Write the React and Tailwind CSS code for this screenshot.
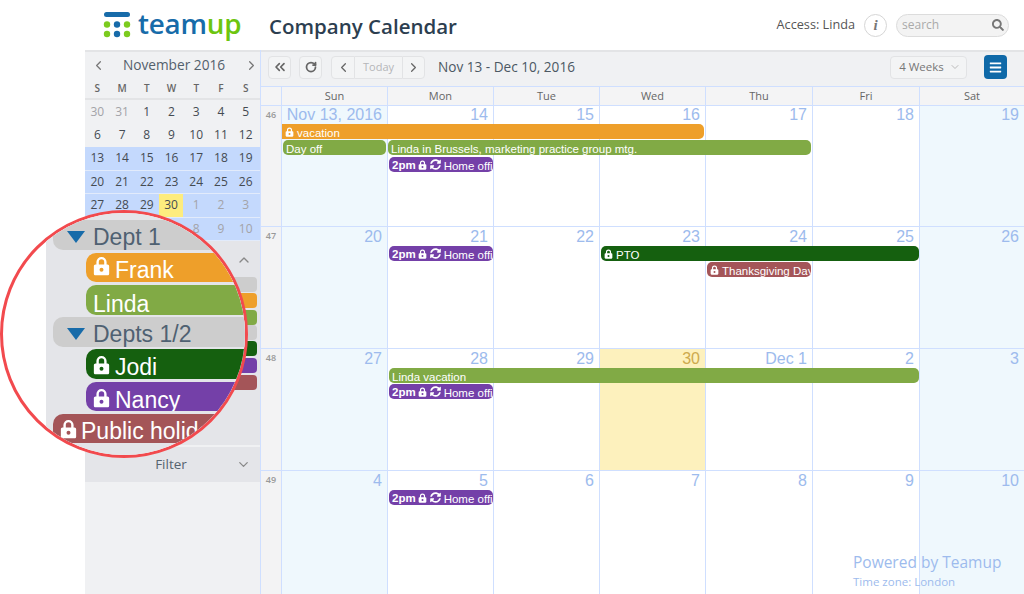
import React from "react";
import { FaSearch, FaSyncAlt, FaBars } from "react-icons/fa";
import { ChevronLeft, ChevronRight, ChevronsLeft, ChevronDown, ChevronUp, RotateCw } from "lucide-react";

const OPEN = "font-['Open_Sans',sans-serif]";

function Lock({ className }) {
  return (
    <svg viewBox="0 0 12 14" className={className} fill="currentColor">
      <path fillRule="evenodd" d="M2.4 6V4.2a3.6 3.6 0 0 1 7.2 0V6h.6c.7 0 1.2.5 1.2 1.2v5.2c0 .7-.5 1.2-1.2 1.2H1.8c-.7 0-1.2-.5-1.2-1.2V7.200c0-.7.5-1.2 1.200-1.2h.6zm1.700 0h3.800V4.200a1.900 1.900 0 0 0-3.800 0V6zM6 8.300a1.400 1.400 0 1 0 0 2.800 1.400 1.400 0 0 0 0-2.800z" />
    </svg>
  );
}

function Logo() {
  return (
    <div className="flex items-center h-full">
      <svg width="30" height="30" viewBox="0 0 30 30" className="ml-[18px] shrink-0">
        <rect x="1" y="2" width="26" height="5" rx="2.500" fill="#176ba9" />
        <circle cx="4" cy="14.500" r="3.200" fill="#7ccb1e" />
        <circle cx="14" cy="14.500" r="3.200" fill="#176ba9" />
        <circle cx="24" cy="14.500" r="3.200" fill="#7ccb1e" />
        <circle cx="4" cy="24" r="3.200" fill="#7ccb1e" />
        <circle cx="14" cy="24" r="3.200" fill="#176ba9" />
        <circle cx="24" cy="24" r="3.200" fill="#7ccb1e" />
      </svg>
      <div className={`${OPEN} ml-[5px] text-[27.800px] font-semibold tracking-[-0.2px] leading-none pb-[2px]`}>
        <span className="text-[#176ba9]">team</span>
        <span className="text-[#6cc510]">up</span>
      </div>
    </div>
  );
}

function Header() {
  return (
    <div className={`${OPEN} h-[50px] flex items-center bg-white`}>
      <div className="w-[158px] h-full">
        <Logo />
      </div>
      <div className="ml-[26px] pt-[2px] text-[20.500px] font-semibold text-[#2c3e50] leading-none">Company Calendar</div>
      <div className="ml-auto flex items-center mr-[15px]">
        <span className="text-[12.700px] text-[#555]">Access: Linda</span>
        <div className="ml-[9px] w-[23px] h-[23px] rounded-full border border-[#d6d6d6] flex items-center justify-center font-['Liberation_Serif',serif] italic font-bold text-[15px] text-[#777]">i</div>
        <div className="ml-[9px] w-[113px] h-[23px] rounded-full border border-[#dcdcdc] bg-[#f3f3f3] flex items-center pl-[5px] pr-[4px]">
          <span className="text-[12px] text-[#aaa]">search</span>
          <FaSearch className="ml-auto text-[12px] text-[#777]" />
        </div>
      </div>
    </div>
  );
}

const MINI = [
  [["30", 1], ["31", 1], "1", "2", "3", "4", "5"],
  ["6", "7", "8", "9", "10", "11", "12"],
  ["13", "14", "15", "16", "17", "18", "19"],
  ["20", "21", "22", "23", "24", "25", "26"],
  ["27", "28", "29", ["30", 2], ["1", 1], ["2", 1], ["3", 1]],
  [["4", 1], ["5", 1], ["6", 1], ["7", 1], ["8", 1], ["9", 1], ["10", 1]],
];

function MiniCal() {
  return (
    <div className={`${OPEN} text-[#555]`}>
      <div className="h-[27px] flex items-center justify-between pl-[6px] pr-[1px]">
        <ChevronLeft size={15} strokeWidth={2} className="text-[#777]" />
        <span className="text-[13.700px] text-[#53606c] pr-[2px]">November 2016</span>
        <ChevronRight size={15} strokeWidth={2} className="text-[#777]" />
      </div>
      <div className="grid grid-cols-7 h-[21px] border-b-2 border-[#e3e4e6] text-[10px] font-semibold text-[#666] text-center items-center pr-[2px]">
        {["S", "M", "T", "W", "T", "F", "S"].map((d, i) => (
          <span key={i}>{d}</span>
        ))}
      </div>
      {MINI.map((row, r) => (
        <div key={r} className={`grid grid-cols-7 h-[23.500px] text-[12px] text-center pr-[2px] ${r >= 2 ? "bg-[#c4d9fd] border-b border-[#e2ebfb]" : ""}`}>
          {row.map((c, i) => {
            const arr = Array.isArray(c);
            const txt = arr ? c[0] : c;
            const kind = arr ? c[1] : 0;
            return (
              <span
                key={i}
                className={`flex items-center justify-center ${kind === 1 ? "text-[#a3a3a8]" : "text-[#444b52]"} ${kind === 2 ? "bg-[#fdec7e] mr-[1px]" : ""}`}
              >
                {txt}
              </span>
            );
          })}
        </div>
      ))}
    </div>
  );
}

function Sidebar() {
  return (
    <div className="w-[175px] shrink-0 bg-[#f0f1f3] flex flex-col border-t-2 border-[#e3e4e6]">
      <MiniCal />
      <div className="h-[204px] bg-[#e4e5e9] flex flex-col items-end pr-[3px]">
        <ChevronUp size={16} className="text-[#888] mt-[11px] mr-[5px]" />
        <div className="w-full flex flex-col mt-[9px]">
          <div className="h-[15px] rounded-[4px] bg-[#cdcdcd]" />
          <div className="h-[15px] mt-[1px] rounded-[4px] bg-[#ee9f2a]" />
          <div className="h-[15px] mt-[2px] rounded-[4px] bg-[#81aa45]" />
          <div className="h-[15px] rounded-[4px] bg-[#cdcdcd]" />
          <div className="h-[15px] mt-[1px] rounded-[4px] bg-[#15600f]" />
          <div className="h-[15px] mt-[2px] rounded-[4px] bg-[#7440a8]" />
          <div className="h-[15px] mt-[2px] rounded-[4px] bg-[#a45558]" />
        </div>
      </div>
      <div className={`${OPEN} h-[35px] mt-[2px] bg-[#e4e5e9] flex items-center justify-center relative text-[13.500px] text-[#56636f] pr-[3px]`}>
        Filter
        <ChevronDown size={15} className="absolute right-[9px] text-[#888]" />
      </div>
    </div>
  );
}

function Btn({ children, className = "" }) {
  return (
    <div className={`h-[23px] flex items-center justify-center border border-[#e2e3e5] bg-[#f3f4f5] text-[#666] ${className}`}>
      {children}
    </div>
  );
}

function Toolbar() {
  return (
    <div className={`${OPEN} h-[36px] bg-[#f0f1f3] border-t-2 border-[#e3e4e6] flex items-center pl-[7px] pb-[4px]`}>
      <Btn className="w-[23px] rounded-[4px]"><ChevronsLeft size={16} strokeWidth={2.5} /></Btn>
      <Btn className="w-[23px] rounded-[4px] ml-[8px]"><RotateCw size={12} strokeWidth={3.500} /></Btn>
      <div className="flex ml-[9px]">
        <Btn className="w-[24px] rounded-l-[4px]"><ChevronLeft size={15} strokeWidth={2} /></Btn>
        <Btn className="w-[47px] border-l-0 border-r-0 text-[11px] text-[#b5b6b9]">Today</Btn>
        <Btn className="w-[23px] rounded-r-[4px]"><ChevronRight size={15} strokeWidth={2} /></Btn>
      </div>
      <span className="ml-[13px] text-[13.600px] text-[#4c5863]">Nov 13 - Dec 10, 2016</span>
      <Btn className="ml-auto w-[77px] rounded-[4px] text-[11.500px] text-[#777] gap-[5px] pl-[3px]">
        4 Weeks <ChevronDown size={12} className="text-[#bbb]" />
      </Btn>
      <div className="ml-[17px] mr-[17px] w-[23px] h-[24px] rounded-[4px] bg-[#0f69a8] flex items-center justify-center text-white">
        <FaBars className="text-[13px]" />
      </div>
    </div>
  );
}

const COLS = "grid-cols-[106px_106px_106px_106px_107px_107px_105px]";

const COL_START = {
  1: "col-start-1",
  2: "col-start-2",
  3: "col-start-3",
  4: "col-start-4",
  5: "col-start-5",
  6: "col-start-6",
  7: "col-start-7",
};
const COL_END = {
  2: "col-end-2",
  3: "col-end-3",
  4: "col-end-4",
  5: "col-end-5",
  6: "col-end-6",
  7: "col-end-7",
  8: "col-end-8",
};
const ROW = { 2: "row-start-2", 3: "row-start-3", 4: "row-start-4" };

function Event({ from, to, row, color, locked, time, repeat, text, className = "" }) {
  return (
    <div
      className={`${COL_START[from]} ${COL_END[to]} ${ROW[row]} h-[15px] mx-[1px] overflow-hidden rounded-[5px] flex items-center whitespace-nowrap text-white text-[11.500px] leading-[15px] font-['Liberation_Sans',sans-serif] pl-[3px] ${color} ${className}`}
    >
      {time && <b className="mr-[2px] shrink-0 pt-[2px]">{time}</b>}
      {locked && <Lock className="w-[9px] h-[10px] mr-[3px] shrink-0" />}
      {repeat && <FaSyncAlt className="text-[11px] mr-[3px] shrink-0" />}
      <span className="pt-[3px]">{text}</span>
    </div>
  );
}

function Home({ row }) {
  return <Event from={2} to={3} row={row} color="bg-[#7440a8] mr-[0px] ml-[2px]" time="2pm" locked repeat text="Home office" />;
}

const WEEKS = [
  {
    n: 46,
    days: ["Nov 13, 2016", "14", "15", "16", "17", "18", "19"],
    events: (
      <>
        <Event from={1} to={5} row={2} color="bg-[#ee9f2a] rounded-l-none" locked text="vacation" />
        <Event from={1} to={2} row={3} color="bg-[#81aa45] ml-[2px]" text="Day off" />
        <Event from={2} to={6} row={3} color="bg-[#81aa45]" text="Linda in Brussels, marketing practice group mtg." />
        <Home row={4} />
      </>
    ),
  },
  {
    n: 47,
    days: ["20", "21", "22", "23", "24", "25", "26"],
    events: (
      <>
        <Home row={2} />
        <Event from={4} to={7} row={2} color="bg-[#15600f] ml-[2px] mr-0" locked text="PTO" />
        <Event from={5} to={6} row={3} color="bg-[#a45558] ml-[2px]" locked text="Thanksgiving Day" />
      </>
    ),
  },
  {
    n: 48,
    days: ["27", "28", "29", "30", "Dec 1", "2", "3"],
    today: 3,
    events: (
      <>
        <Event from={2} to={7} row={2} color="bg-[#81aa45] ml-[2px] mr-0" text="Linda vacation" />
        <Home row={3} />
      </>
    ),
  },
  {
    n: 49,
    days: ["4", "5", "6", "7", "8", "9", "10"],
    events: <Home row={2} />,
  },
];

function Week({ w, h }) {
  const first = w.n === 46;
  return (
    <div className={`flex border-t border-[#cfdfff] ${h}`}>
      <div className="w-[20px] shrink-0 bg-[#f3f3f4] text-[9px] text-[#999] text-center pt-[2px] font-semibold font-['Open_Sans',sans-serif]">{w.n}</div>
      <div className={`grid ${COLS} ${first ? "grid-rows-[18px_16px_17px_16px_1fr]" : "grid-rows-[19px_16px_17px_16px_1fr]"} flex-1`}>
        {w.days.map((d, i) => {
          const weekend = i === 0 || i === 6;
          const today = w.today === i;
          return (
            <div
              key={i}
              style={{ gridColumn: i + 1, gridRow: "1 / 6" }}
              className={`border-l border-[#cfdfff] text-right pr-[5px] text-[16px] ${first ? "leading-[18px]" : "leading-[20px]"} font-['Liberation_Sans',sans-serif] ${today ? "bg-[#fdf1bd] text-[#cdaa4e]" : "text-[#9dbbed]"} ${weekend ? "bg-[#eff8fd]" : ""} ${!today && !weekend ? "bg-white" : ""}`}
            >
              {d}
            </div>
          );
        })}
        {w.events}
      </div>
    </div>
  );
}

function Calendar() {
  return (
    <div className="flex-1 min-w-0 flex flex-col border-l border-[#cfdfff]">
      <Toolbar />
      <div className={`${OPEN} flex h-[19px] bg-[#f4f4f5] text-[11px] text-[#666] border-t border-[#cfdfff]`}>
        <div className="w-[20px] shrink-0" />
        <div className={`grid ${COLS} flex-1`}>
          {["Sun", "Mon", "Tue", "Wed", "Thu", "Fri", "Sat"].map((d) => (
            <div key={d} className="border-l border-[#cfdfff] flex items-center justify-center">{d}</div>
          ))}
        </div>
      </div>
      <Week w={WEEKS[0]} h="h-[121px]" />
      <Week w={WEEKS[1]} h="h-[122px]" />
      <Week w={WEEKS[2]} h="h-[122px]" />
      <Week w={WEEKS[3]} h="h-[124px]" />
      <div className={`${OPEN} absolute left-[853px] top-[552px] text-[#9dbbed]`}>
        <div className="text-[15.500px] leading-[20px]">Powered by Teamup</div>
        <div className="text-[11.500px] leading-[16px] mt-[2px]">Time zone: London</div>
      </div>
    </div>
  );
}

function MagRow({ children, className = "" }) {
  return (
    <div className={`flex items-center whitespace-nowrap overflow-hidden rounded-[10px] text-[23px] font-['Liberation_Sans',sans-serif] leading-none ${className}`}>
      {children}
    </div>
  );
}

function Tri() {
  return (
    <svg width="18" height="12" viewBox="0 0 18 12" className="ml-[14px] mr-[8px] shrink-0">
      <path d="M0 0h18L9 12z" fill="#176ba9" />
    </svg>
  );
}

function MagLock({ className = "" }) {
  return <Lock className={`w-[17px] h-[20px] shrink-0 mb-[5px] ${className}`} />;
}

function Magnifier() {
  return (
    <div className="absolute left-0 top-[210px] w-[248px] h-[248px] rounded-full border-[3px] border-[#f24a4e] bg-white overflow-hidden">
      <div className="ml-[43px] h-full bg-[#e4e5e9] pl-[7px] pt-[7px] flex flex-col">
        <MagRow className="h-[30px] bg-[#cdcdcd] text-[#4f6172] pt-[4px] w-[200px] shrink-0"><Tri />Dept 1</MagRow>
        <MagRow className="h-[29px] mt-[3px] ml-[33px] w-[180px] shrink-0 bg-[#ee9f2a] text-white pl-[7px] pt-[6px]"><MagLock className="mr-[5px] mb-[9px]" />Frank</MagRow>
        <MagRow className="h-[30px] mt-[3px] ml-[33px] w-[180px] shrink-0 bg-[#81aa45] text-white pl-[7px] pt-[8px]">Linda</MagRow>
        <MagRow className="h-[30px] mt-[2px] bg-[#cdcdcd] text-[#4f6172] pt-[4px] w-[200px] shrink-0"><Tri />Depts 1/2</MagRow>
        <MagRow className="h-[30px] mt-[2px] ml-[33px] w-[180px] shrink-0 bg-[#15600f] text-white pl-[7px] pt-[6px]"><MagLock className="mr-[5px]" />Jodi</MagRow>
        <MagRow className="h-[29px] mt-[3px] ml-[33px] w-[180px] shrink-0 bg-[#7440a8] text-white pl-[7px] pt-[7px]"><MagLock className="mr-[5px]" />Nancy</MagRow>
        <MagRow className="h-[29px] mt-[3px] w-[200px] shrink-0 bg-[#a45558] text-white pl-[7px] pt-[6px]"><MagLock className="mr-[4px]" />Public holidays</MagRow>
      </div>
    </div>
  );
}

export default function App() {
  return (
    <div className="relative w-[1024px] h-[594px] overflow-hidden bg-white flex">
      <div className="w-[85px] shrink-0 bg-white" />
      <div className="flex-1 min-w-0 flex flex-col">
        <Header />
        <div className="flex flex-1 min-h-0">
          <Sidebar />
          <Calendar />
        </div>
      </div>
      <Magnifier />
    </div>
  );
}
